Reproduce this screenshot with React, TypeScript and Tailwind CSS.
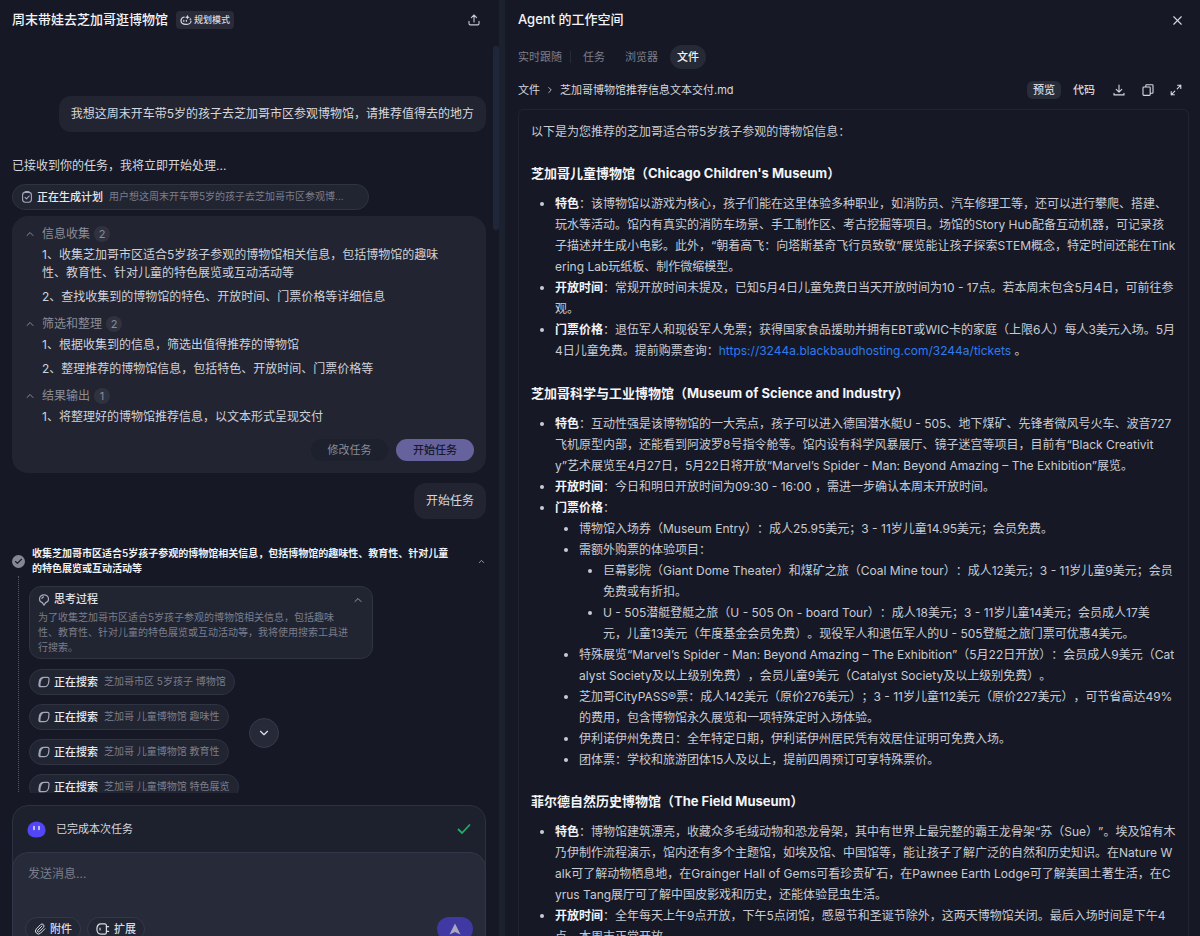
import React, { useState } from 'react';
import { Check, ChevronDown, ChevronRight, ChevronUp, Paperclip, X } from 'lucide-react';

const planGroups = [
  {
    title: '信息收集',
    items: [
      '收集芝加哥市区适合5岁孩子参观的博物馆相关信息，包括博物馆的趣味性、教育性、针对儿童的特色展览或互动活动等',
      '查找收集到的博物馆的特色、开放时间、门票价格等详细信息',
    ],
  },
  {
    title: '筛选和整理',
    items: ['根据收集到的信息，筛选出值得推荐的博物馆', '整理推荐的博物馆信息，包括特色、开放时间、门票价格等'],
  },
  { title: '结果输出', items: ['将整理好的博物馆推荐信息，以文本形式呈现交付'] },
];

const searches = [
  '芝加哥市区 5岁孩子 博物馆',
  '芝加哥 儿童博物馆 趣味性',
  '芝加哥 儿童博物馆 教育性',
  '芝加哥 儿童博物馆 特色展览',
];

const tabs = ['任务', '浏览器', '文件'];

function PlanModeIcon() {
  return (
    <svg width="12" height="12" viewBox="0 0 12 12" fill="none" stroke="currentColor" strokeWidth="1.2" strokeLinecap="round">
      <path d="M4.200 3C2.200 3.400 1 4.800 1 6.600 1 8.900 3.200 10.400 6 10.400s5-1.500 5-3.200" />
      <path d="M3.800 6.400v.8M6.400 6.400v.8" />
      <path d="M7.400.8l.7 1.700 1.700.7-1.700.7-.7 1.700-.7-1.700L5 3.200l1.700-.7z" fill="currentColor" stroke="none" />
      <path d="M10.400 3.800l.4 1 1 .4-1 .4-.4 1-.4-1-1-.4 1-.4z" fill="currentColor" stroke="none" />
    </svg>
  );
}

function UploadIcon() {
  return (
    <svg width="12" height="12" viewBox="0 0 12 12" fill="none" stroke="currentColor" strokeWidth="1.1" strokeLinecap="round" strokeLinejoin="round">
      <path d="M6 8V1.2M3.4 3.6L6 1l2.6 2.6M1 7.4v2.2c0 .8.5 1.3 1.3 1.3h7.4c.8 0 1.3-.5 1.3-1.3V7.4" />
    </svg>
  );
}

function PlanIcon() {
  return (
    <svg width="12" height="12" viewBox="0 0 12 12" fill="none" stroke="currentColor" strokeWidth="1.1" strokeLinecap="round" strokeLinejoin="round">
      <rect x="1.6" y="1.4" width="8.8" height="9.8" rx="2.6" />
      <path d="M4.4 1h3.2" strokeWidth="1.8" />
      <path d="M4 6.4l1.5 1.5L8.2 5" />
    </svg>
  );
}

function BulbIcon() {
  return (
    <svg width="12" height="12" viewBox="0 0 12 12" fill="none" stroke="currentColor" strokeWidth="1.2" strokeLinecap="round" strokeLinejoin="round">
      <path d="M4.300 8.600C2.600 8 1.500 6.600 1.500 4.900 1.500 2.500 3.500.8 6 .8s4.500 1.700 4.500 4.100c0 1.700-1.100 3.100-2.800 3.700" />
      <path d="M4.300 8.600L6 11.200l1.700-2.600" />
      <path d="M3.900 4.500c.1-.9.7-1.500 1.600-1.700" />
    </svg>
  );
}

function SearchIcon() {
  return (
    <svg width="12" height="12" viewBox="0 0 12 12" fill="none" stroke="currentColor" strokeLinejoin="round">
      <path d="M6 1.400h3.600c.9 0 1.500.7 1.400 1.600l-.3 3.200C10.400 8.900 8.500 10.700 6 10.700H2.400c-.9 0-1.500-.7-1.400-1.600l.3-3.200C1.600 3.200 3.500 1.400 6 1.400z" strokeWidth="1.200" />
      <path d="M5.600 1.500C3.200 2 1.700 3.500 1.400 6l-.3 3.200c.1.800.6 1.400 1.300 1.500C1.800 7.500 2.600 3.600 5.600 1.500z" fill="currentColor" strokeWidth=".5" />
    </svg>
  );
}

function ExtensionIcon() {
  return (
    <svg width="14" height="12" viewBox="0 0 14 12" fill="none" stroke="currentColor" strokeWidth="1.2" strokeLinecap="round" strokeLinejoin="round">
      <path d="M10.400 3.400V2.500c0-1-.6-1.600-1.600-1.600H5C2.600.900.900 3 .9 6s1.700 5.100 4.100 5.100h3.800c1 0 1.600-.6 1.600-1.600v-.9" />
      <path d="M10.400 3.400v5.200M10.400 3.600h2.200M10.400 8.400h2.200M4 5v2" />
    </svg>
  );
}

function DownloadIcon() {
  return (
    <svg width="12" height="12" viewBox="0 0 12 12" fill="none" stroke="currentColor" strokeWidth="1.1" strokeLinecap="round" strokeLinejoin="round">
      <path d="M6 1v7M3.200 5.400L6 8.200l2.800-2.800M1 9.200v1.700h10V9.200" />
    </svg>
  );
}

function CopyIcon() {
  return (
    <svg width="12" height="12" viewBox="0 0 12 12" fill="none" stroke="currentColor" strokeWidth="1.1" strokeLinejoin="round">
      <rect x="1" y="3" width="7.200" height="8.400" rx=".8" />
      <path d="M3.800 3V1.400c0-.4.3-.7.7-.7h5.800c.4 0 .7.3.7.7v7.200c0 .4-.3.7-.7.7H8.200" />
    </svg>
  );
}

function ExpandIcon() {
  return (
    <svg width="12" height="12" viewBox="0 0 12 12" fill="none" stroke="currentColor" strokeWidth="1.1" strokeLinecap="round" strokeLinejoin="round">
      <path d="M7.600 1.200h3.200v3.200M10.800 1.200L7.200 4.800M4.400 10.800H1.200V7.600M1.200 10.800l3.600-3.600" />
    </svg>
  );
}

function StatusPill({ icon, label, detail, width = 'w-fit' }: { icon: React.ReactNode; label: string; detail: string; width?: string }) {
  return (
    <div className={`flex h-[26px] items-center rounded-full border border-[#2f3342] bg-[#212431] px-2 whitespace-nowrap ${width}`}>
      <span className="mr-1 text-[#a3a9bd]">{icon}</span>
      <span className="mr-1.5 text-[11px] font-medium text-[#e8eaf1]">{label}</span>
      <span className="text-[10px] text-[#7b7e8c]">{detail}</span>
    </div>
  );
}

function ChatPanel() {
  const [message, setMessage] = useState('');

  return (
    <section className="flex min-h-0 min-w-0 flex-col overflow-hidden">
      <header className="flex h-10 shrink-0 items-center pr-[19px] pl-3">
        <h1 className="text-[13px] font-medium text-[#f3f4f8]">周末带娃去芝加哥逛博物馆</h1>
        <span className="ml-2 flex h-[18px] items-center gap-0.5 rounded-sm bg-[#292b38] px-1 text-[9px] font-medium text-[#d8dae3]">
          <PlanModeIcon />
          规划模式
        </span>
        <button type="button" aria-label="分享" className="ml-auto text-[#c6c8d2]">
          <UploadIcon />
        </button>
      </header>

      <div className="relative flex min-h-0 flex-1 flex-col">
        <div className="min-h-0 flex-1 overflow-hidden pr-[13px] pl-3">
          <div className="mt-14 ml-auto w-fit rounded-xl bg-[#222531] px-3 py-2 leading-5 text-[#d5d7df]">
            我想这周末开车带5岁的孩子去芝加哥市区参观博物馆，请推荐值得去的地方
          </div>

          <p className="mt-6 mb-2 leading-5 text-[#d5d7df]">已接收到你的任务，我将立即开始处理...</p>
          <StatusPill
            icon={<PlanIcon />}
            label="正在生成计划"
            detail="用户想这周末开车带5岁的孩子去芝加哥市区参观博..."
            width="w-[357px]"
          />

          <div className="mt-1.5 flex flex-col rounded-2xl bg-[#222531] pt-[9px] pr-3 pb-3 pl-3">
            <div className="flex flex-col gap-[9px]">
              {planGroups.map((group) => (
                <section key={group.title}>
                  <h2 className="flex h-[18px] items-center text-[#8a8d99]">
                    <ChevronUp size={12} strokeWidth={2} className="mr-1.5" />
                    {group.title}
                    <span className="ml-1 flex size-4 items-center justify-center rounded-full bg-[#30333f] text-[11px]">{group.items.length}</span>
                  </h2>
                  <ol className="mt-[3px] flex flex-col gap-1.5 pr-7 pl-[18px] leading-[18px] text-[#cfd1da]">
                    {group.items.map((item, i) => (
                      <li key={item}>{`${i + 1}、${item}`}</li>
                    ))}
                  </ol>
                </section>
              ))}
            </div>
            <div className="mt-[13px] flex justify-end gap-2 text-[11px]">
              <button type="button" className="h-[22px] w-[77px] rounded-full bg-[#1d202d] text-[#8a8d99]">修改任务</button>
              <button type="button" className="h-[22px] w-[78px] rounded-full bg-[#66629d] font-medium text-[#171a2a]">开始任务</button>
            </div>
          </div>

          <div className="mt-2.5 ml-auto w-fit rounded-xl bg-[#222531] px-3 py-2 leading-5 text-[#d5d7df]">开始任务</div>

          <div className="mt-[27px] flex items-center text-[10px] leading-[15px] font-semibold text-[#f0f1f5]">
            <span className="mr-[7px] flex size-[13px] shrink-0 items-center justify-center rounded-full bg-[#858894] text-[#171a26]">
              <Check size={9} strokeWidth={3} />
            </span>
            <h2>
              收集芝加哥市区适合5岁孩子参观的博物馆相关信息，包括博物馆的趣味性、教育性、针对儿童
              <br />
              的特色展览或互动活动等
            </h2>
            <button type="button" aria-label="收起" className="ml-auto text-[#b9bcc8]">
              <ChevronUp size={9} strokeWidth={2} />
            </button>
          </div>

          <div className="ml-1.5 flex flex-col gap-[9px] border-l border-dotted border-[#525563] pl-[10px]">
            <div className="mt-2.5 mb-px w-[344px] rounded-xl border border-[#2f3342] bg-[#212431] px-2 pt-[5px] pb-[3px] text-[10px] leading-[15px]">
              <div className="mb-[3px] flex items-center text-[11px] font-medium text-[#e0e2ea]">
                <span className="mr-1 text-[#a3a9bd]">
                  <BulbIcon />
                </span>
                思考过程
                <ChevronUp size={12} strokeWidth={2} className="ml-auto text-[#9a9dab]" />
              </div>
              <p className="text-[#7b7e8c]">
                为了收集芝加哥市区适合5岁孩子参观的博物馆相关信息，包括趣味
                <br />
                性、教育性、针对儿童的特色展览或互动活动等，我将使用搜索工具进
                <br />
                行搜索。
              </p>
            </div>
            {searches.map((query) => (
              <StatusPill key={query} icon={<SearchIcon />} label="正在搜索" detail={query} />
            ))}
          </div>
        </div>

        {/* Scrollbar thumb */}
        <div className="absolute top-1.5 right-0 h-[184px] w-1.5 rounded-full bg-[#20263a]" />
        <button
          type="button"
          aria-label="滚动到底部"
          className="absolute bottom-[45px] left-[53%] flex size-[30px] -translate-x-1/2 items-center justify-center rounded-full border border-[#363a4b] bg-[#262938] text-[#e0e2ea]"
        >
          <ChevronDown size={14} strokeWidth={2} />
        </button>
      </div>

      <div className="mt-3 mr-[13px] -mb-[17px] ml-3 shrink-0 rounded-2xl border border-[#2c3040] bg-[#1d202d]">
        <div className="flex h-[46px] items-center pr-3.5 pl-3.5 text-[11px] text-[#d5d7df]">
          <svg width="19" height="17" viewBox="0 0 19 17" className="mr-2.5">
            <path d="M9.500.500C14.500.500 18.500 4.400 18.500 9.300c0 4.500-3 7.200-9 7.200s-9-2.700-9-7.200C.500 4.400 4.500.500 9.500.500z" fill="#5246f6" />
            <path d="M7 5.500v3M12 5.500v3" stroke="#fff" strokeWidth="1.300" strokeLinecap="round" />
          </svg>
          已完成本次任务
          <svg width="14" height="12" viewBox="0 0 14 12" fill="none" stroke="#1fae62" strokeWidth="1.800" className="ml-auto">
            <path d="M1 6l4 4 8-8.500" />
          </svg>
        </div>
        <div className="-mx-px rounded-2xl border border-[#32364a] bg-[#272a38] px-3 pt-3 pb-2.5">
          <textarea
            aria-label="发送消息"
            placeholder="发送消息..."
            value={message}
            onChange={(e) => setMessage(e.target.value)}
            className="block h-[52px] w-full resize-none bg-transparent px-[3px] leading-[18px] outline-none placeholder:text-[#7b7e8c]"
          />
          <div className="flex items-center gap-1.5 text-[11px] font-medium text-[#d8dae3]">
            <button type="button" className="flex h-6 items-center gap-1 rounded-full border border-[#343849] bg-[#232634] px-2">
              <Paperclip size={12} strokeWidth={2} />
              附件
            </button>
            <button type="button" className="flex h-6 items-center gap-1 rounded-full border border-[#343849] bg-[#232634] px-2">
              <ExtensionIcon />
              扩展
            </button>
            <button type="button" aria-label="发送" className="ml-auto flex h-6 w-9 items-center justify-center rounded-full bg-[#4039a3]">
              <svg width="12" height="12" viewBox="0 0 12 12" fill="#a9a8bf">
                <path d="M6 .500L11.500 11.500 6 9 .500 11.500z" />
              </svg>
            </button>
          </div>
        </div>
      </div>
    </section>
  );
}

function Museum({ name, children }: { name: string; children: React.ReactNode }) {
  return (
    <section>
      <h3 className="mt-[21px] mb-[9px] text-[13px] font-bold text-[#f3f4f8]">{name}</h3>
      <ul className="list-disc pl-6">{children}</ul>
    </section>
  );
}

function Label({ children }: { children: string }) {
  return <strong className="font-semibold text-[#f3f4f8]">{children}</strong>;
}

function WorkspacePanel() {
  const [tab, setTab] = useState('文件');

  return (
    <section className="flex min-h-0 min-w-0 flex-col overflow-hidden pr-[11px] pl-[13px]">
      <header className="flex h-10 shrink-0 items-center justify-between">
        <h1 className="text-[13px] font-medium text-[#f3f4f8]">Agent 的工作空间</h1>
        <button type="button" aria-label="关闭" className="mr-1 text-[#d5d7df]">
          <X size={15} strokeWidth={1.8} />
        </button>
      </header>

      <nav className="mt-[5px] flex h-6 shrink-0 items-center text-[11px] text-[#7b7e8b]">
        <button type="button">实时跟随</button>
        <span className="ml-2 h-3 w-px bg-[#262a38]" />
        <div className="ml-0.5 flex">
          {tabs.map((name) => (
            <button
              key={name}
              type="button"
              onClick={() => setTab(name)}
              className={name === tab ? 'ml-0.5 h-6 rounded-full bg-[#262936] px-[7px] font-medium text-[#f0f1f5]' : 'h-6 px-2.5'}
            >
              {name}
            </button>
          ))}
        </div>
      </nav>

      <div className="mt-2.5 flex h-[22px] shrink-0 items-center text-[11px] text-[#d5d7df]">
        <span>文件</span>
        <ChevronRight size={10} strokeWidth={2} className="mx-[5px]" />
        <span>芝加哥博物馆推荐信息文本交付.md</span>
        <div className="mr-[7px] ml-auto flex items-center">
          <button type="button" className="h-[18px] rounded-md bg-[#292c39] px-1.5 font-medium">预览</button>
          <button type="button" className="ml-1.5 h-[18px] px-1.5 font-medium">代码</button>
          <button type="button" aria-label="下载" className="ml-3"><DownloadIcon /></button>
          <button type="button" aria-label="复制" className="ml-[17px]"><CopyIcon /></button>
          <button type="button" aria-label="全屏" className="ml-4"><ExpandIcon /></button>
        </div>
      </div>

      <article className="mt-2 min-h-0 flex-1 overflow-hidden rounded-t-md border border-b-0 border-[#202432] px-3 pt-[11px] leading-[21px] break-all text-[#c9cbd4] [text-spacing-trim:space-all]">
        <p>以下是为您推荐的芝加哥适合带5岁孩子参观的博物馆信息：</p>

        <Museum name="芝加哥儿童博物馆（Chicago Children's Museum）">
          <li>
            <Label>特色</Label>：该博物馆以游戏为核心，孩子们能在这里体验多种职业，如消防员、汽车修理工等，还可以进行攀爬、搭建、玩水等活动。馆内有真实的消防车场景、手工制作区、考古挖掘等项目。场馆的Story Hub配备互动机器，可记录孩<br />子描述并生成小电影。此外，“朝着高飞：向塔斯基奇飞行员致敬”展览能让孩子探索STEM概念，特定时间还能在Tink<br />ering Lab玩纸板、制作微缩模型。
          </li>
          <li>
            <Label>开放时间</Label>：常规开放时间未提及，已知5月4日儿童免费日当天开放时间为10 - 17点。若本周末包含5月4日，可前往参观。
          </li>
          <li>
            <Label>门票价格</Label>：退伍军人和现役军人免票；获得国家食品援助并拥有EBT或WIC卡的家庭（上限6人）每人3美元入场。5月4日儿童免费。提前购票查询：
            <a href="https://3244a.blackbaudhosting.com/3244a/tickets" className="inline-block leading-[22px] text-[#2f7bf0]">https://3244a.blackbaudhosting.com/3244a/tickets</a> 。
          </li>
        </Museum>

        <Museum name="芝加哥科学与工业博物馆（Museum of Science and Industry）">
          <li>
            <Label>特色</Label>：互动性强是该博物馆的一大亮点，孩子可以进入德国潜水艇U - 505、地下煤矿、先锋者微风号火车、波音727飞机原型内部，还能看到阿波罗8号指令舱等。馆内设有科学风暴展厅、镜子迷宫等项目，目前有“Black Creativit<br />y”艺术展览至4月27日，5月22日将开放“Marvel’s Spider - Man: Beyond Amazing – The Exhibition”展览。
          </li>
          <li>
            <Label>开放时间</Label>：今日和明日开放时间为09:30 - 16:00 ，需进一步确认本周末开放时间。
          </li>
          <li>
            <Label>门票价格</Label>：
            <ul className="list-disc pl-6">
              <li>博物馆入场券（Museum Entry）：成人25.95美元；3 - 11岁儿童14.95美元；会员免费。</li>
              <li>
                需额外购票的体验项目：
                <ul className="list-disc pl-6">
                  <li>巨幕影院（Giant Dome Theater）和煤矿之旅（Coal Mine tour）：成人12美元；3 - 11岁儿童9美元；会员免费或有折扣。</li>
                  <li>U - 505潜艇登艇之旅（U - 505 On - board Tour）：成人18美元；3 - 11岁儿童14美元；会员成人17美<br />元，儿童13美元（年度基金会员免费）。现役军人和退伍军人的U - 505登艇之旅门票可优惠4美元。</li>
                </ul>
              </li>
              <li>特殊展览“Marvel’s Spider - Man: Beyond Amazing – The Exhibition”（5月22日开放）：会员成人9美元（Catalyst Society及以上级别免费），会员儿童9美元（Catalyst Society及以上级别免费）。</li>
              <li>芝加哥CityPASS®票：成人142美元（原价276美元）；3 - 11岁儿童112美元（原价227美元），可节省高达49%的费用，包含博物馆永久展览和一项特殊定时入场体验。</li>
              <li>伊利诺伊州免费日：全年特定日期，伊利诺伊州居民凭有效居住证明可免费入场。</li>
              <li>团体票：学校和旅游团体15人及以上，提前四周预订可享特殊票价。</li>
            </ul>
          </li>
        </Museum>

        <Museum name="菲尔德自然历史博物馆（The Field Museum）">
          <li>
            <Label>特色</Label>：博物馆建筑漂亮，收藏众多毛绒动物和恐龙骨架，其中有世界上最完整的霸王龙骨架“苏（Sue）”。埃及馆有木乃伊制作流程演示，馆内还有多个主题馆，如埃及馆、中国馆等，能让孩子了解广泛的自然和历史知识。在Nature Walk可了解动物栖息地，在Grainger Hall of Gems可看珍贵矿石，在Pawnee Earth Lodge可了解美国土著生活，在Cyrus Tang展厅可了解中国皮影戏和历史，还能体验昆虫生活。
          </li>
          <li>
            <Label>开放时间</Label>：全年每天上午9点开放，下午5点闭馆，感恩节和圣诞节除外，这两天博物馆关闭。最后入场时间是下午4点，本周末正常开放。
          </li>
        </Museum>
      </article>
    </section>
  );
}

export default function App() {
  return (
    <main
      lang="zh-CN"
      className="grid h-screen grid-cols-[499fr_6px_695fr] grid-rows-[minmax(0,1fr)] overflow-hidden bg-[#161925] font-['Inter','Noto_Sans_CJK_SC',sans-serif] text-xs"
    >
      <ChatPanel />
      <div className="bg-[#1c212e]" />
      <WorkspacePanel />
    </main>
  );
}
